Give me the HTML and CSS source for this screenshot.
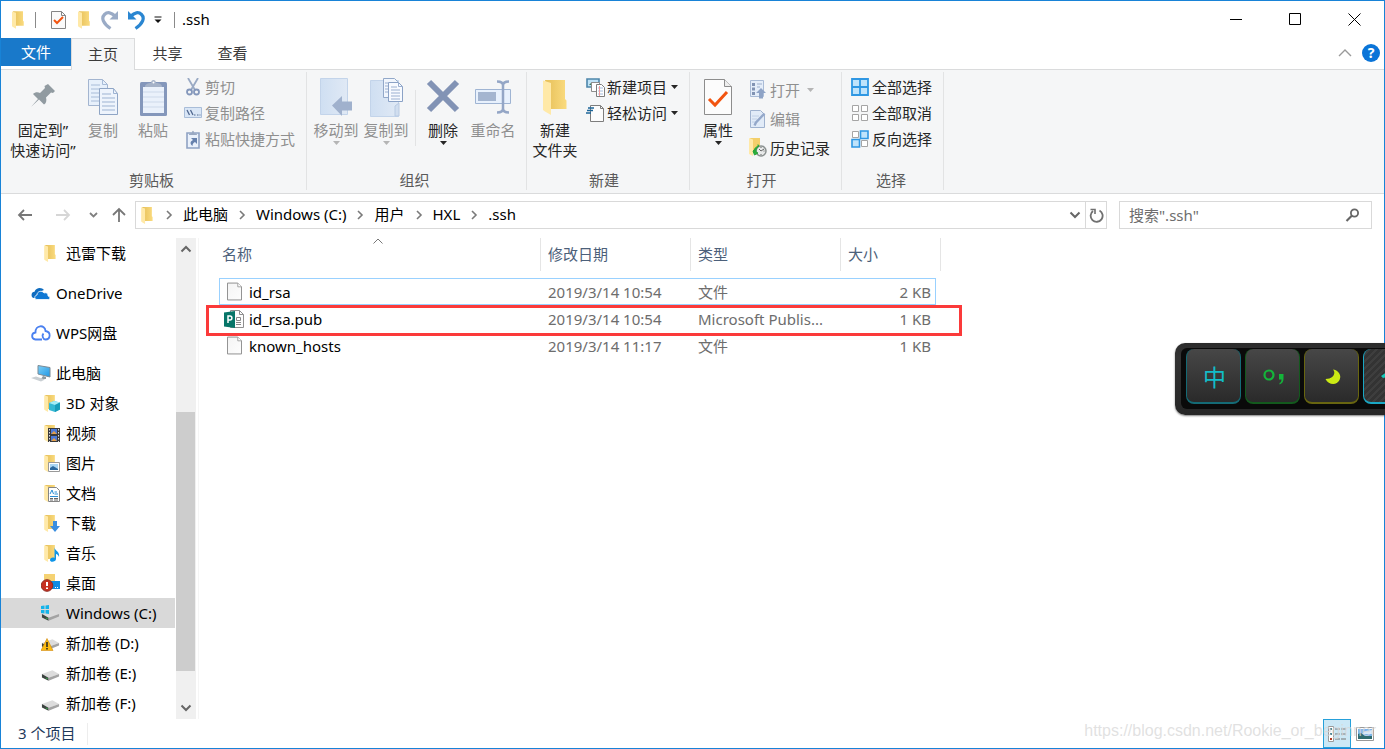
FILE: index.html
```
<!DOCTYPE html>
<html lang="zh-CN">
<head>
  <meta charset="UTF-8">
  <meta name="viewport" content="width=device-width, initial-scale=1.0">
  <title>.ssh</title>
  <link rel="stylesheet" href="styles.css">
</head>
<body>
  <!-- Shared icon shapes -->
  <svg class="defs" width="0" height="0" aria-hidden="true">
    <defs>
      <linearGradient id="folderBack" x1="0" x2="1">
        <stop offset="0" stop-color="#e6bf58"/>
        <stop offset="1" stop-color="#fadb7f"/>
      </linearGradient>
      <linearGradient id="paleBlue" x1="0" x2="1">
        <stop offset="0" stop-color="#cfdff2"/>
        <stop offset="1" stop-color="#e0e9f5"/>
      </linearGradient>
      <linearGradient id="screen" x1="0" y1="0" x2="1" y2="1">
        <stop offset="0" stop-color="#7fd0f7"/>
        <stop offset="1" stop-color="#1f97e4"/>
      </linearGradient>
      <linearGradient id="paper" x1="0" y1="0" x2="1" y2="1">
        <stop offset="0" stop-color="#f4f4f4"/>
        <stop offset="1" stop-color="#fdfdfd"/>
      </linearGradient>
      <symbol id="folder" viewBox="0 0 24 35">
        <path d="M2 0h20v19l1.500 1.500V29H7z" fill="url(#folderBack)"/>
        <path d="M0 .5L8 3v32l-6-3.500L0 30z" fill="#ffe9a8"/>
      </symbol>
      <symbol id="chevron" viewBox="0 0 8 10">
        <path d="M2 1l4 4-4 4" fill="none" stroke="#7a7a7a" stroke-width="1.600"/>
      </symbol>
      <symbol id="down" viewBox="0 0 12 8">
        <path d="M1.500 1.500L6 6l4.500-4.500" fill="none" stroke="#666" stroke-width="2"/>
      </symbol>
      <symbol id="caret" viewBox="0 0 7 4">
        <path d="M0 0h7L3.500 4z" fill="currentColor"/>
      </symbol>
      <symbol id="check" viewBox="0 0 28 36">
        <path d="M.5.500h20l7 7v28H.5z" fill="#fcfcfc" stroke="#8d8d8d"/>
        <path d="M20.500.500v7h7" fill="#eee" stroke="#8d8d8d"/>
        <path d="M5 20l6 6L23 13" fill="none" stroke="#f25410" stroke-width="3"/>
      </symbol>
      <symbol id="file" viewBox="0 0 16 19">
        <path d="M.5.500h11l4 4v14H.5z" fill="url(#paper)" stroke="#8a8a8a"/>
        <path d="M11.500.500v4h4" fill="#fff" stroke="#a0a0a0"/>
      </symbol>
      <symbol id="drive" viewBox="0 0 20 12">
        <path d="M1 5l11-4 7 4-11 4z" fill="#dcdcdc"/>
        <path d="M1 5l7 4v3L1 8.500z" fill="#3c4340"/>
        <path d="M8 9l11-4v2.500L8 12z" fill="#a3a3a3"/>
        <path d="M5 8.500l2 1v1l-2-1z" fill="#37c04e"/>
      </symbol>
    </defs>
  </svg>

  <div class="window">
    <header class="titlebar">
      <svg class="title-folder" width="12" height="18"><use href="#folder"/></svg>
      <span class="title-sep"></span>
      <button class="quick" aria-label="属性">
        <svg width="15" height="18" viewBox="0 0 15 18"><path d="M.5.500h10l4 4v13H.5z" fill="#fafafa" stroke="#858585"/><path d="M10.500.500v4h4" fill="none" stroke="#858585"/><path d="M3 9l3 3 6-6" fill="none" stroke="#f25410" stroke-width="2"/></svg>
      </button>
      <button class="quick" aria-label="新建文件夹"><svg width="12" height="18"><use href="#folder"/></svg></button>
      <button class="quick" aria-label="恢复">
        <svg width="18" height="20" viewBox="0 0 18 20"><path d="M9.500 18.500C2 13.500 0 8 3.500 4.500c3-3 7-2 10.500 1.500" fill="none" stroke="#9aabc6" stroke-width="3.200"/><path d="M17 1v8.500H8.500z" fill="#9aabc6"/></svg>
      </button>
      <button class="quick" aria-label="撤消">
        <svg width="18" height="20" viewBox="0 0 18 20"><path d="M8.500 18.500c7.500-5 9.500-10.500 6-14-3-3-7-2-10.500 1.500" fill="none" stroke="#2a86d1" stroke-width="3.200"/><path d="M1 1v8.500h8.500z" fill="#2a86d1"/></svg>
      </button>
      <button class="quick quick-more" aria-label="自定义快速访问工具栏">
        <svg width="8" height="8" viewBox="0 0 8 8"><path d="M.5 1h7" stroke="#111"/><path d="M.5 3.500h7L4 7z" fill="#111"/></svg>
      </button>
      <span class="title-sep title-sep-last"></span>
      <h1 class="title">.ssh</h1>
      <div class="win-buttons">
        <button aria-label="最小化"><svg width="13" height="13"><path d="M0 6.500h12" stroke="#000"/></svg></button>
        <button aria-label="最大化"><svg width="13" height="13"><path d="M.5.500h11v11H.5z" fill="none" stroke="#000"/></svg></button>
        <button aria-label="关闭"><svg width="13" height="13"><path d="M.5.500l12 12M12.500.500l-12 12" stroke="#000"/></svg></button>
      </div>
    </header>

    <nav class="tabs">
      <button class="tab tab-file">文件</button>
      <button class="tab tab-active">主页</button>
      <button class="tab">共享</button>
      <button class="tab">查看</button>
      <div class="tabs-right">
        <button aria-label="最小化功能区"><svg width="14" height="8"><path d="M1 7l6-6 6 6" fill="none" stroke="#9a9a9a" stroke-width="1.400"/></svg></button>
        <button class="help" aria-label="帮助">?</button>
      </div>
    </nav>

    <section class="ribbon">
      <div class="group">
        <div class="tools">
          <button class="big big-wide">
            <span class="big-icon"><svg width="26" height="28" viewBox="0 0 26 28"><path d="M18 1l7 7-2 2-2-.5-5 5c1 3 0 6-2 7l-5-5-7.500 7L1 24l7-8-5-5c2-2 5-2 7-1l5-5-.5-2z" fill="#919ba1"/></svg></span>
            <span>固定到”<br>快速访问”</span>
          </button>
          <button class="big" disabled>
            <span class="big-icon"><svg width="31" height="37" viewBox="0 0 31 37"><path d="M.5.500h14l5 5v21H.5z" fill="#e7f0fb" stroke="#a3b5d0"/><path d="M14.500.500v5h5M3 6h9M3 10h13M3 14h8M3 18h8M3 22h8" fill="none" stroke="#a8bcd8"/><path d="M11.500 9.500h14l4 5v21h-18z" fill="#eef4fc" stroke="#8fa5c5"/><path d="M25.500 9.500v5h4M14 15h9M14 19h13M14 23h13M14 27h13M14 31h13" fill="none" stroke="#9db3d2"/></svg></span>
            <span>复制</span>
          </button>
          <button class="big" disabled>
            <span class="big-icon"><svg width="27" height="37" viewBox="0 0 27 37"><rect y="3" width="27" height="34" rx="1.500" fill="#8497bb"/><path d="M3 8h21v26H3z" fill="#eaf1fb"/><path d="M3 13h21M3 18h21M3 23h21M3 28h21" stroke="#cdd9ea"/><path d="M5 8c0-3 3-4 6-4 0-4 5-4 5 0 3 0 6 1 6 4z" fill="#a5b2c8"/><circle cx="13.500" cy="3.500" r="1" fill="#fff"/></svg></span>
            <span>粘贴</span>
          </button>
          <div class="small-list">
            <button class="small" disabled>
              <span class="small-icon"><svg width="14" height="18" viewBox="0 0 14 18"><path d="M2 0l7 12M12 0L5 12" stroke="#9aaac4" stroke-width="1.800"/><circle cx="3.500" cy="14" r="2.500" fill="none" stroke="#8497bb" stroke-width="1.800"/><circle cx="10.500" cy="14" r="2.500" fill="none" stroke="#8497bb" stroke-width="1.800"/></svg></span>
              剪切
            </button>
            <button class="small" disabled>
              <span class="small-icon"><svg width="18" height="12" viewBox="0 0 18 12"><path d="M.5.500h17v10H.5z" fill="#d9e6f6" stroke="#a9bdd8"/><path d="M3 3l2.500 5M6.500 3L9 8" stroke="#51688f" stroke-width="1.300"/><path d="M10 8h1.500M13 8h1.500M15.500 8h1" stroke="#51688f"/></svg></span>
              复制路径
            </button>
            <button class="small" disabled>
              <span class="small-icon"><svg width="14" height="19" viewBox="0 0 14 19"><path d="M1 3h12v15H1z" fill="#eaf1fb" stroke="#8fa2c3" stroke-width="1.600"/><path d="M3 5c0-2 2-1.500 3-2 0-3 2-3 2 0 1 .5 3 0 3 2z" fill="#9aa9c2"/><path d="M5 8h6v6L9 12c-2 1-2.500 2-2.500 4C3 13 5 11 7 10z" fill="#6681ad"/></svg></span>
              粘贴快捷方式
            </button>
          </div>
        </div>
        <div class="group-name">剪贴板</div>
      </div>

      <div class="group group-organize">
        <div class="tools">
          <button class="big" disabled>
            <span class="big-icon"><svg width="33" height="38" viewBox="0 0 33 38"><path d="M.5.500h27v36H.5z" fill="url(#paleBlue)" stroke="#c3d4ea"/><path d="M12 27.500L22 18v5.500h10v9H22V38z" fill="#a0b1cd"/></svg></span>
            <span>移动到</span>
            <svg class="big-caret" width="7" height="4"><use href="#caret"/></svg>
          </button>
          <button class="big" disabled>
            <span class="big-icon"><svg width="33" height="39" viewBox="0 0 33 39"><path d="M.5 2.500h28v36H.5z" fill="url(#paleBlue)" stroke="#c3d4ea"/><path d="M25 38V28l4-3v13z" fill="#d1deef" stroke="#b8cae3"/><path d="M13.500.500h11l3 3v16h-14z" fill="#f1f6fd" stroke="#92a8c9"/><path d="M18.500 4.500h10l4 4v15h-14z" fill="#f7faff" stroke="#8ba2c6"/><path d="M28.500 4.500v4h4M21 9h6M21 12h9M21 15h9M21 18h9M21 21h9M15 5h3M15 8h3M15 11h3M15 14h3" fill="none" stroke="#9aafd0"/></svg></span>
            <span>复制到</span>
            <svg class="big-caret" width="7" height="4"><use href="#caret"/></svg>
          </button>
          <span class="tool-sep"></span>
          <button class="big">
            <span class="big-icon"><svg width="34" height="36" viewBox="0 0 34 36"><path d="M3 3l28 28M31 3L3 31" stroke="#8293b5" stroke-width="6"/></svg></span>
            <span>删除</span>
            <svg class="big-caret" width="7" height="4"><use href="#caret"/></svg>
          </button>
          <button class="big" disabled>
            <span class="big-icon"><svg width="37" height="35" viewBox="0 0 37 35"><path d="M.5 9.500h35v14H.5z" fill="#e8f1fd" stroke="#9fb4d3"/><path d="M3 12h18v9H3z" fill="#a4b5d0"/><path d="M22 1.500c4 0 6 1 6 4v23c0 3-2 4-6 4M34 1.500c-4 0-6 1-6 4v23c0 3 2 4 6 4" fill="none" stroke="#94a6c6" stroke-width="2.500"/></svg></span>
            <span>重命名</span>
          </button>
        </div>
        <div class="group-name">组织</div>
      </div>

      <div class="group group-new">
        <div class="tools">
          <button class="big">
            <span class="big-icon"><svg width="24" height="35"><use href="#folder"/></svg></span>
            <span>新建<br>文件夹</span>
          </button>
          <div class="small-list">
            <button class="small">
              <span class="small-icon"><svg width="19" height="19" viewBox="0 0 19 19"><path d="M1 1h12v8H1z" fill="#bfe2f7" stroke="#4d86ab" stroke-width="1.600"/><path d="M3 7l3-3 3 3z" fill="#3f7c54"/><path d="M5.500 4.500h8v9h-8z" fill="#fff" stroke="#8d8d8d"/><path d="M10.500 6.500h5l3 3v9h-8z" fill="#fff" stroke="#7d7d7d"/><path d="M12 10h5M12 13h5M12 16h5" stroke="#a5bcdc"/><path d="M13.500 8v10" stroke="#f49a9a"/></svg></span>
              新建项目
              <svg width="7" height="4"><use href="#caret"/></svg>
            </button>
            <button class="small">
              <span class="small-icon"><svg width="19" height="19" viewBox="0 0 19 19"><path d="M4.500 1.500h10l3 3v13h-13z" fill="#fcfcfc" stroke="#7d7d7d"/><path d="M14.500 1.500v3h3" fill="none" stroke="#7d7d7d"/><path d="M2 4h6M1 6.500h6M0 9h5" stroke="#1d6699" stroke-width="1.300"/></svg></span>
              轻松访问
              <svg width="7" height="4"><use href="#caret"/></svg>
            </button>
          </div>
        </div>
        <div class="group-name">新建</div>
      </div>

      <div class="group group-open">
        <div class="tools">
          <button class="big">
            <span class="big-icon"><svg width="28" height="36"><use href="#check"/></svg></span>
            <span>属性</span>
            <svg class="big-caret" width="7" height="4"><use href="#caret"/></svg>
          </button>
          <div class="small-list small-list-open">
            <button class="small" disabled>
              <span class="small-icon"><svg width="16" height="19" viewBox="0 0 16 19"><path d="M.5.500h13v16H.5z" fill="#e4edf9" stroke="#a9bbd6"/><path d="M2 3h3v3H2zM2 7.500h3v3H2zM2 12h3v3H2z" fill="#8193b3"/><path d="M7 4h5M7 7h3" stroke="#9dafcc"/><path d="M11 8l5 5h-3v5.500H9V13H6z" fill="#8ea3c6"/></svg></span>
              打开
              <svg width="7" height="4"><use href="#caret"/></svg>
            </button>
            <button class="small" disabled>
              <span class="small-icon"><svg width="16" height="18" viewBox="0 0 16 18"><path d="M.5.500h10l4 4v13H.5z" fill="#e1ebf8" stroke="#9fb2cf"/><path d="M2 6h7M2 9h5M2 12h4" stroke="#c0d0e6"/><path d="M14.500 3.500L6 12.500 4.500 15.500" stroke="#94a8ca" stroke-width="2.400" fill="none"/></svg></span>
              编辑
            </button>
            <button class="small">
              <span class="small-icon"><svg width="18" height="19" viewBox="0 0 18 19"><path d="M1 0h10v15H4z" fill="#f3cf6b"/><path d="M0 0l4 1.500V18l-4-2z" fill="#ffe9a8"/><circle cx="12" cy="13" r="5" fill="#e8eaea" stroke="#8b9190" stroke-width="1.500"/><path d="M12 13l3-2M12 13l-2-2M12 9v1M12 16v1M15.500 13h-1" stroke="#666"/><path d="M5 15c0-4 1-6 5-7l-1-1.500M10 8c-3 2-3 4-3 6l2 1-3.500 2L4 13z" fill="#29b33b" stroke="#29a53b"/></svg></span>
              历史记录
            </button>
          </div>
        </div>
        <div class="group-name">打开</div>
      </div>

      <div class="group group-select">
        <div class="tools">
          <div class="small-list">
            <button class="small">
              <span class="small-icon"><svg width="18" height="18" viewBox="0 0 18 18"><path d="M1 1h16v16H1zM9 1v16M1 9h16" fill="#bfe3fb" stroke="#2f97e3" stroke-width="1.800"/></svg></span>
              全部选择
            </button>
            <button class="small">
              <span class="small-icon"><svg width="18" height="18" viewBox="0 0 18 18"><path d="M1.500 1.500h6v6h-6zM10.500 1.500h6v6h-6zM1.500 10.500h6v6h-6zM10.500 10.500h6v6h-6z" fill="#fff" stroke="#a5a5a5"/></svg></span>
              全部取消
            </button>
            <button class="small">
              <span class="small-icon"><svg width="18" height="18" viewBox="0 0 18 18"><path d="M1.500 1.500h6v6h-6zM10.500 10.500h6v6h-6z" fill="#fff" stroke="#a5a5a5"/><path d="M9.500 1H17v7.500H9.500zM1 9.500h7.500V17H1z" fill="#bfe3fb" stroke="#2f97e3" stroke-width="1.600"/></svg></span>
              反向选择
            </button>
          </div>
        </div>
        <div class="group-name">选择</div>
      </div>
    </section>

    <div class="address-row">
      <div class="nav-buttons">
        <button aria-label="后退"><svg width="16" height="12"><path d="M15 6H2M7 1L2 6l5 5" fill="none" stroke="#777" stroke-width="1.800"/></svg></button>
        <button aria-label="前进" disabled><svg width="16" height="12"><path d="M1 6h13M9 1l5 5-5 5" fill="none" stroke="#d6d6d6" stroke-width="1.800"/></svg></button>
        <button class="nav-recent" aria-label="最近浏览的位置"><svg width="9" height="6"><path d="M1 1l3.500 3.500L8 1" fill="none" stroke="#808080" stroke-width="1.800"/></svg></button>
        <button class="nav-up" aria-label="上移"><svg width="14" height="16"><path d="M7 15V2M1 8l6-6 6 6" fill="none" stroke="#777" stroke-width="1.800"/></svg></button>
      </div>
      <div class="address">
        <svg class="address-folder" width="12" height="17"><use href="#folder"/></svg>
        <span class="crumb-sep"><svg width="8" height="10"><use href="#chevron"/></svg></span>
        <button>此电脑</button>
        <span class="crumb-sep"><svg width="8" height="10"><use href="#chevron"/></svg></span>
        <button>Windows (C:)</button>
        <span class="crumb-sep"><svg width="8" height="10"><use href="#chevron"/></svg></span>
        <button>用户</button>
        <span class="crumb-sep"><svg width="8" height="10"><use href="#chevron"/></svg></span>
        <button>HXL</button>
        <span class="crumb-sep"><svg width="8" height="10"><use href="#chevron"/></svg></span>
        <button>.ssh</button>
        <button class="address-drop" aria-label="以前的位置"><svg width="12" height="8"><use href="#down"/></svg></button>
        <button class="refresh" aria-label="刷新"><svg width="15" height="15" viewBox="0 0 15 15"><path d="M10.500 2.500A6 6 0 1 1 4 3" fill="none" stroke="#707070" stroke-width="1.800"/><path d="M1.500 1.500h4.500V6" fill="none" stroke="#707070" stroke-width="1.600"/></svg></button>
      </div>
      <label class="search">
        <input type="text" placeholder='搜索".ssh"' aria-label="搜索">
        <svg width="15" height="14" viewBox="0 0 15 14"><circle cx="9.500" cy="5" r="3.600" fill="none" stroke="#666" stroke-width="1.800"/><path d="M7 7.500L1.500 13" stroke="#666" stroke-width="2.200"/></svg>
      </label>
    </div>

    <main class="main">
      <nav class="sidebar">
        <a class="item item-child" href="#"><span class="item-icon"><svg width="12" height="17"><use href="#folder"/></svg></span>迅雷下载</a>
        <a class="item item-root" href="#"><span class="item-icon"><svg width="19" height="13" viewBox="0 0 19 13"><path d="M3 11a3.200 3.200 0 0 1 .5-6.300C5 0 11 0 13 3l-5 2-3 6z" fill="#0f6cbf"/><path d="M6 12.500c-3 0-3-4 0-4.500 0-4 5-5 7-2 3-1 4 1 4 3 3 1 2 3.500 0 3.500z" fill="#0f78d4" stroke="#fff" stroke-width=".8"/></svg></span>OneDrive</a>
        <a class="item item-root" href="#"><span class="item-icon"><svg width="20" height="16" viewBox="0 0 20 16"><path d="M11 14.500H4.500C0 14 0 8 4.500 7.500 4 0 14-1 14.500 6c6 1 5 8.500 0 8.500-2.500 0-4-4-2-6" fill="none" stroke="#4a80f0" stroke-width="1.800"/></svg></span>WPS网盘</a>
        <a class="item item-root" href="#"><span class="item-icon"><svg width="20" height="17" viewBox="0 0 20 17"><path d="M7 .5l12 2v9.500L7 9z" fill="url(#screen)" stroke="#7b8a95"/><path d="M12 11l3 1v2h-5z" fill="#8d999f"/><path d="M0 13l5-1.500 9 3-4 2z" fill="#c9cfd3"/></svg></span>此电脑</a>
        <a class="item item-child" href="#"><span class="item-icon"><svg width="12" height="17"><use href="#folder"/></svg><svg class="over" width="11" height="11" viewBox="0 0 11 11"><path d="M0 2l5-2 6 1.500v7L6 11 0 9z" fill="#35b8d3"/><path d="M0 2l5-2 6 1.500L6 4z" fill="#a6ecf6"/><path d="M6 4l5-2.500v7L6 11z" fill="#189cba"/></svg></span>3D 对象</a>
        <a class="item item-child" href="#"><span class="item-icon"><svg width="12" height="17"><use href="#folder"/></svg><svg class="over" width="12" height="14" viewBox="0 0 12 14"><path d="M0 0h12v14H0z" fill="#3a3a3a"/><path d="M3 1h6v5H3z" fill="#4b79d8"/><path d="M3 8h6v5H3z" fill="#4b79d8"/><path d="M3 6l3-3 3 3zM3 13l3-3 3 3z" fill="#e3a04b"/><path d="M1.500 1v13M10.500 1v13" stroke="#ddd" stroke-dasharray="1.500 1.500"/></svg></span>视频</a>
        <a class="item item-child" href="#"><span class="item-icon"><svg width="12" height="17"><use href="#folder"/></svg><svg class="over" width="12" height="10" viewBox="0 0 12 10"><path d="M.5.500h11v9H.5z" fill="#fff" stroke="#999"/><path d="M2 2h8v6H2z" fill="#a9d5f3"/><path d="M2 6l3-2 5 3v1H2z" fill="#2b689e"/></svg></span>图片</a>
        <a class="item item-child" href="#"><span class="item-icon"><svg width="12" height="17"><use href="#folder"/></svg><svg class="over" width="12" height="15" viewBox="0 0 12 15"><path d="M.5.500h8l3 3v11H.5z" fill="#fff" stroke="#858585"/><path d="M2 7l2-4 1.500 4M6.500 5H9M6.500 7H10M2 9.500h8" fill="none" stroke="#2c8dd3"/><path d="M2 11.500h3M6 11.500h4M2 13h3M6 13h4" stroke="#666"/></svg></span>文档</a>
        <a class="item item-child" href="#"><span class="item-icon"><svg width="12" height="17"><use href="#folder"/></svg><svg class="over" width="10" height="11" viewBox="0 0 10 11"><path d="M3 0h4v5h3l-5 6-5-6h3z" fill="#3a8ee0"/></svg></span>下载</a>
        <a class="item item-child" href="#"><span class="item-icon"><svg width="12" height="17"><use href="#folder"/></svg><svg class="over" width="11" height="15" viewBox="0 0 11 15"><path d="M5.500 0c0 4 5.500 4 4.500 10-1-3-3-3-3-3v5c0 3-6 4-6 1 0-2 2.500-3 4.500-2z" fill="#0e95e8"/></svg></span>音乐</a>
        <a class="item item-child" href="#"><span class="item-icon item-icon-wide"><svg width="19" height="18" viewBox="0 0 19 18"><path d="M3 0h11v9H3z" fill="#f5d273"/><path d="M10 7h9v8h-9z" fill="#0f8ce5"/><path d="M14 13.500h1M16 13.500h1" stroke="#fff"/><circle cx="6" cy="11.500" r="5.800" fill="#c72f20" stroke="#8f2a20"/><path d="M6 8v4M6 13.500v1.500" stroke="#fff" stroke-width="2"/></svg></span>桌面</a>
        <a class="item item-child item-selected" href="#"><span class="item-icon item-icon-wide"><svg width="19" height="16" viewBox="0 0 19 16"><use href="#drive" y="4" width="19" height="12"/><path d="M0 1l3.500-.5V4H0zM4.500.500L8 0v4H4.500zM0 5h3.500v3.500L0 8zM4.500 5H8v4l-3.500-.5z" fill="#13b3ea"/></svg></span>Windows (C:)</a>
        <a class="item item-child" href="#"><span class="item-icon item-icon-wide"><svg width="19" height="16" viewBox="0 0 19 16"><use href="#drive" y="3" width="19" height="12"/><path d="M6 3.500l6 12H0z" fill="#fbbb12" stroke="#d28a10" stroke-width=".6"/><path d="M6 7v5M6 13v1.500" stroke="#222" stroke-width="1.500"/></svg></span>新加卷 (D:)</a>
        <a class="item item-child" href="#"><span class="item-icon item-icon-wide"><svg width="19" height="16" viewBox="0 0 19 16"><use href="#drive" y="4" width="19" height="12"/></svg></span>新加卷 (E:)</a>
        <a class="item item-child" href="#"><span class="item-icon item-icon-wide"><svg width="19" height="16" viewBox="0 0 19 16"><use href="#drive" y="4" width="19" height="12"/></svg></span>新加卷 (F:)</a>
      </nav>
      <div class="scrollbar">
        <button aria-label="向上滚动"><svg class="flip" width="12" height="8"><use href="#down"/></svg></button>
        <div class="scroll-track"><div class="scroll-thumb"></div></div>
        <button aria-label="向下滚动"><svg width="12" height="8"><use href="#down"/></svg></button>
      </div>

      <div class="content">
        <table class="files">
          <thead>
            <tr>
              <th class="col-name">名称<svg class="sort" width="10" height="6"><path d="M.5 5.500L5 1l4.500 4.500" fill="none" stroke="#777"/></svg></th>
              <th class="col-date">修改日期</th>
              <th class="col-type">类型</th>
              <th class="col-size">大小</th>
            </tr>
          </thead>
          <tbody>
            <tr class="focused">
              <td class="name"><span class="file-cell"><span class="file-icon"><svg width="15" height="19"><use href="#file"/></svg></span>id_rsa</span></td>
              <td>2019/3/14 10:54</td>
              <td>文件</td>
              <td class="size">2 KB</td>
            </tr>
            <tr class="marked">
              <td class="name"><span class="file-cell"><span class="file-icon"><svg width="20" height="20" viewBox="0 0 20 20"><path d="M6.500 1.500h9l4 4v13h-13z" fill="#fdfdfd" stroke="#8f8f8f"/><path d="M15.500 1.500v4h4" fill="none" stroke="#8f8f8f"/><path d="M12.500 8.500h4v3h-4zM12 13.500h5M12 15.500h5" fill="none" stroke="#888"/><path d="M0 3.500L11 2v17L0 17.500z" fill="#077568"/><path d="M4 14V7h2c2.500 0 2.500 4 0 4H4" fill="none" stroke="#fff" stroke-width="1.500"/></svg></span>id_rsa.pub</span></td>
              <td>2019/3/14 10:54</td>
              <td>Microsoft Publis...</td>
              <td class="size">1 KB</td>
            </tr>
            <tr>
              <td class="name"><span class="file-cell"><span class="file-icon"><svg width="15" height="19"><use href="#file"/></svg></span>known_hosts</span></td>
              <td>2019/3/14 11:17</td>
              <td>文件</td>
              <td class="size">1 KB</td>
            </tr>
          </tbody>
        </table>
      </div>
    </main>

    <footer class="statusbar">
      <span class="count">3 个项目</span>
      <div class="views">
        <button class="view view-active" aria-label="详细信息"><svg width="18" height="16" viewBox="0 0 18 16"><path d="M.5.500h5v15h-5z" fill="#fff" stroke="#9a9a9a"/><path d="M2 3h2M2 8h2" stroke="#4b8c9c" stroke-width="2"/><path d="M2 13h2" stroke="#b33a20" stroke-width="2"/><path d="M7 3h5M13 3h5M7 8h5M13 8h5M7 13h5M13 13h5" stroke="#777"/></svg></button>
        <button class="view" aria-label="大图标"><svg width="18" height="14" viewBox="0 0 18 14"><path d="M.5.500h17v13H.5z" fill="#fff" stroke="#999"/><path d="M2 2h14v10H2z" fill="#7cb2ec"/><path d="M8 5c3-2 5-1 8-2v4H6z" fill="#d7e9fa"/><path d="M2 7l3-1 4 3h7v3H2z" fill="#2f6b6f"/></svg></button>
      </div>
    </footer>
  </div>

  <!-- Input method toolbar, hangs off the right edge -->
  <div class="ime">
    <div class="ime-keys">
      <button class="key key-cyan">中</button>
      <button class="key key-green" aria-label="中文标点"><svg width="22" height="16" viewBox="0 0 22 16"><circle cx="6" cy="6" r="4.500" fill="none" stroke="#14b53a" stroke-width="2.200"/><path d="M16 5h4.500v5c0 3-2 5-4 5.500v-1.500c1.500-.5 2-2 2-3.500H16z" fill="#14b53a"/></svg></button>
      <button class="key key-yellow" aria-label="半角"><svg width="16" height="16" viewBox="0 0 16 16"><path d="M8 .5c3 3 1 9-7.500 9.500 3 6 11 7 14 1C17 6 13 1 8 .5z" fill="#cbea14"/></svg></button>
      <button class="key key-mixed" aria-label="皮肤"><svg width="22" height="16" viewBox="0 0 22 16"><path d="M0 7l9-6h4l9 6-3 3-3-1v7H6V8L2 9z" fill="#14c8b9"/></svg></button>
    </div>
  </div>
  <div class="watermark">https://blog.csdn.net/Rookie_or_beginner</div>
</body>
</html>
```
FILE: styles.css
```
* {
  box-sizing: border-box;
}
body {
  position: relative;
  margin: 0;
  overflow: hidden;
  font-family: "Noto Sans", "Noto Sans CJK SC", sans-serif;
  font-size: 15px;
  line-height: 20px;
  color: #000;
}
button {
  display: flex;
  align-items: center;
  justify-content: center;
  padding: 0;
  border: none;
  background: none;
  font: inherit;
  color: inherit;
}
svg {
  flex: none;
  display: block;
}
.defs {
  position: absolute;
}
.window {
  display: flex;
  flex-direction: column;
  min-height: 100vh;
  border: 1px solid #1883d7;
  background: #fff;
}

/* Title bar */
.titlebar {
  display: flex;
  align-items: center;
  height: 37px;
  padding-left: 11px;
}
.title-sep {
  width: 1px;
  height: 16px;
  margin: 0 9px 0 11px;
  background: #8a8a8a;
}
.title-sep-last {
  margin: 0 7px;
}
.quick {
  width: 26px;
  height: 26px;
}
.quick-more {
  width: 18px;
}
.title {
  margin: 0;
  padding-bottom: 2px;
  font-size: 15px;
  font-weight: normal;
}
.win-buttons {
  display: flex;
  align-self: stretch;
  margin-left: auto;
}
.win-buttons button {
  width: 59px;
}

/* Tabs */
.tabs {
  display: flex;
  height: 32px;
  border-bottom: 1px solid #dadbdc;
}
.tab {
  width: 65px;
  height: 31px;
  padding-bottom: 2px;
  color: #3b3b3b;
}
.tab-file {
  width: 70px;
  height: 28px;
  padding-bottom: 0;
  background: #1979ca;
  color: #fff;
}
.tab-active {
  width: 64px;
  height: 32px;
  border: 1px solid #dadbdc;
  border-bottom: none;
  background: #f5f6f7;
}
.tabs-right {
  display: flex;
  align-items: center;
  gap: 10px;
  margin-left: auto;
  padding: 0 4px 2px 0;
}
.help {
  width: 18px;
  height: 18px;
  border-radius: 50%;
  background: #0a74d8;
  color: #fff;
  font-size: 14px;
  font-weight: bold;
}

/* Ribbon */
.ribbon {
  display: flex;
  padding: 2px 0 3px;
  border-bottom: 1px solid #dadbdc;
  background: #f5f6f7;
  color: #262626;
}
.group {
  display: flex;
  flex-direction: column;
  padding: 0 11px 0 7px;
  border-right: 1px solid #e2e3e4;
}
.tools {
  display: flex;
  height: 98px;
}
.group-name {
  text-align: center;
  color: #5a5a5a;
}
.group-organize {
  padding: 0 8px 0 4px;
}
.group-new,
.group-open {
  padding-left: 3px;
}
.group-select {
  padding-left: 8px;
}
.big {
  flex-direction: column;
  justify-content: flex-start;
  width: 50px;
  white-space: nowrap;
}
.big-wide {
  width: 70px;
}
.big-icon {
  display: flex;
  align-items: center;
  height: 48px;
  padding-top: 2px;
}
.big:disabled,
.small:disabled {
  color: #8f8f8f;
}
.big-caret {
  margin-top: 1px;
}
.big:disabled .big-caret,
.small:disabled > svg {
  color: #b5b5b5;
}
.tool-sep {
  width: 1px;
  height: 56px;
  margin: 18px 2px 0 4px;
  background: #e2e3e4;
}
.small-list {
  display: flex;
  flex-direction: column;
  align-items: flex-start;
  padding-top: 2px;
}
.big + .small-list {
  padding-left: 5px;
}
.small {
  gap: 2px;
  height: 26px;
  white-space: nowrap;
}
.small > svg {
  margin-left: 2px;
}
.small-icon {
  display: flex;
  justify-content: center;
  width: 20px;
}
.small-list-open {
  padding-top: 3px;
}
.small-list-open .small {
  height: 29px;
}
.small-list-open .small > svg {
  margin-left: 5px;
}

/* Address row */
.address-row {
  display: flex;
  padding: 7px 12px 9px 10px;
}
.nav-buttons {
  display: flex;
  width: 124px;
}
.nav-buttons button {
  width: 28px;
}
.nav-buttons button + button {
  margin-left: 10px;
}
.nav-buttons .nav-recent {
  width: 16px;
  margin-left: 8px;
}
.nav-buttons .nav-up {
  margin-left: 4px;
}
.address {
  display: flex;
  flex: 1;
  align-items: center;
  height: 28px;
  padding-left: 5px;
  border: 1px solid #d9d9d9;
}
.address-folder {
  margin-right: 2px;
}
.address button {
  padding-bottom: 2px;
}
.crumb-sep {
  display: flex;
  justify-content: center;
  width: 28px;
}
.address .address-drop {
  width: 20px;
  margin-left: auto;
  padding: 0;
}
.address .refresh {
  align-self: stretch;
  width: 21px;
  padding: 0;
  border-left: 1px solid #d9d9d9;
}
.search {
  display: flex;
  align-items: center;
  width: 253px;
  margin-left: 12px;
  padding: 0 11px 0 9px;
  border: 1px solid #d9d9d9;
}
.search input {
  flex: 1;
  min-width: 0;
  padding: 0;
  border: none;
  outline: none;
  font: inherit;
}
.search input::placeholder {
  color: #6d6d6d;
}

/* Navigation pane */
.main {
  display: flex;
  flex: 1;
}
.sidebar {
  width: 174px;
}
.item {
  display: flex;
  align-items: center;
  height: 30px;
  color: #000;
  text-decoration: none;
  white-space: nowrap;
}
.item-root {
  margin: 10px 0;
  padding-left: 30px;
}
.item-root + .item-root {
  margin-top: 0;
}
.item-root:has(+ .item-child) {
  margin-bottom: 0;
}
.item-child {
  padding-left: 43px;
}
.item-icon {
  position: relative;
  flex: none;
  width: 22px;
  margin-right: 3px;
}
.item-child .item-icon {
  width: 19px;
}
.item-child .item-icon-wide {
  width: 22px;
  margin-left: -3px;
}
.over {
  position: absolute;
  right: 3px;
  bottom: 0;
}
.item-selected {
  background: #d9d9d9;
}
.scrollbar {
  display: flex;
  flex-direction: column;
  width: 21px;
  margin-right: 2px;
  border-left: 1px solid #fff;
  background: #f0f0f0;
}
.scrollbar button {
  height: 22px;
}
.flip {
  transform: rotate(180deg);
}
.scroll-track {
  display: flex;
  flex: 1;
  flex-direction: column;
  justify-content: flex-end;
  padding: 0 1px 26px 0;
}
.scroll-thumb {
  height: 63%;
  background: #cdcdcd;
}

/* File list */
.content {
  flex: 1;
  padding-left: 20px;
  border-left: 1px solid #f5f5f5;
}
.files {
  width: 722px;
  table-layout: fixed;
  border-collapse: separate;
  border-spacing: 0;
  color: #6d6d6d;
}
.files th {
  position: relative;
  height: 40px;
  padding: 0 8px 8px 7px;
  background: linear-gradient(#e5e5e5, #e5e5e5) top right / 1px 33px no-repeat;
  color: #4c607a;
  font-weight: normal;
  text-align: left;
}
.files .col-name {
  width: 322px;
  padding-left: 3px;
}
.col-date,
.col-type {
  width: 150px;
}
.col-size {
  width: 100px;
}
.sort {
  position: absolute;
  top: 0;
  left: calc(50% - 7px);
}
.files tbody tr {
  position: relative;
}
.files td {
  height: 27px;
  padding: 0 7px;
  white-space: nowrap;
}
.files .name {
  padding-left: 5px;
  color: #000;
}
.files .size {
  padding-right: 10px;
  text-align: right;
}
.file-cell {
  display: flex;
  align-items: center;
}
.file-icon {
  display: flex;
  justify-content: center;
  width: 20px;
  margin-right: 5px;
}
.focused::after {
  content: "";
  position: absolute;
  inset: 0 5px 0 0;
  border: 1px solid #99d1ff;
}
.marked::after {
  content: "";
  position: absolute;
  z-index: 1;
  inset: 0 -21px -4px -13px;
  border: 3px solid #fb3a3a;
}

/* Status bar */
.statusbar {
  display: flex;
  align-items: center;
  height: 29px;
  padding: 0 5px 0 17px;
  color: #1e395b;
}
.count {
  padding: 0 12px 2px 0;
  border-right: 1px solid #ededed;
}
.views {
  display: flex;
  align-self: stretch;
  margin-left: auto;
}
.view {
  width: 28px;
}
.view-active {
  border: 1px solid #26a0da;
  background: #cbe8f6;
}

/* Input method toolbar */
.ime {
  position: absolute;
  top: 343px;
  right: 0;
  width: 210px;
  height: 72px;
  padding: 5px 0 6px 6px;
  overflow: hidden;
  border-radius: 10px 0 0 10px;
  background: linear-gradient(#2c2c2c, #333 20%, #262626);
  box-shadow: 0 1px 2px rgba(0, 0, 0, 0.5);
}
.ime-keys {
  display: flex;
  gap: 4px;
  height: 61px;
  padding: 1px 5px 5px;
  border-radius: 6px 0 0 6px;
  background: #0a0a0a;
}
.key {
  flex: none;
  width: 55px;
  height: 55px;
  padding: 2px 0 0 2px;
  border: solid;
  border-width: 0 1px 2px;
  border-radius: 8px;
  background: linear-gradient(#474747, #2a2a2a);
}
.key-cyan {
  border-color: #146a75;
  color: #12bcc8;
  font-size: 23px;
}
.key-green {
  border-color: #13591d;
}
.key-yellow {
  border-color: #686510;
}
.key-mixed {
  border-color: #1aa7c4;
  background: repeating-linear-gradient(135deg, #333 0 3px, #3e3e3e 3px 5px);
}

.watermark {
  position: absolute;
  right: 9px;
  bottom: 8px;
  color: rgba(215, 215, 215, 0.75);
  font-family: "Liberation Sans", sans-serif;
  font-size: 16px;
  pointer-events: none;
}
```
